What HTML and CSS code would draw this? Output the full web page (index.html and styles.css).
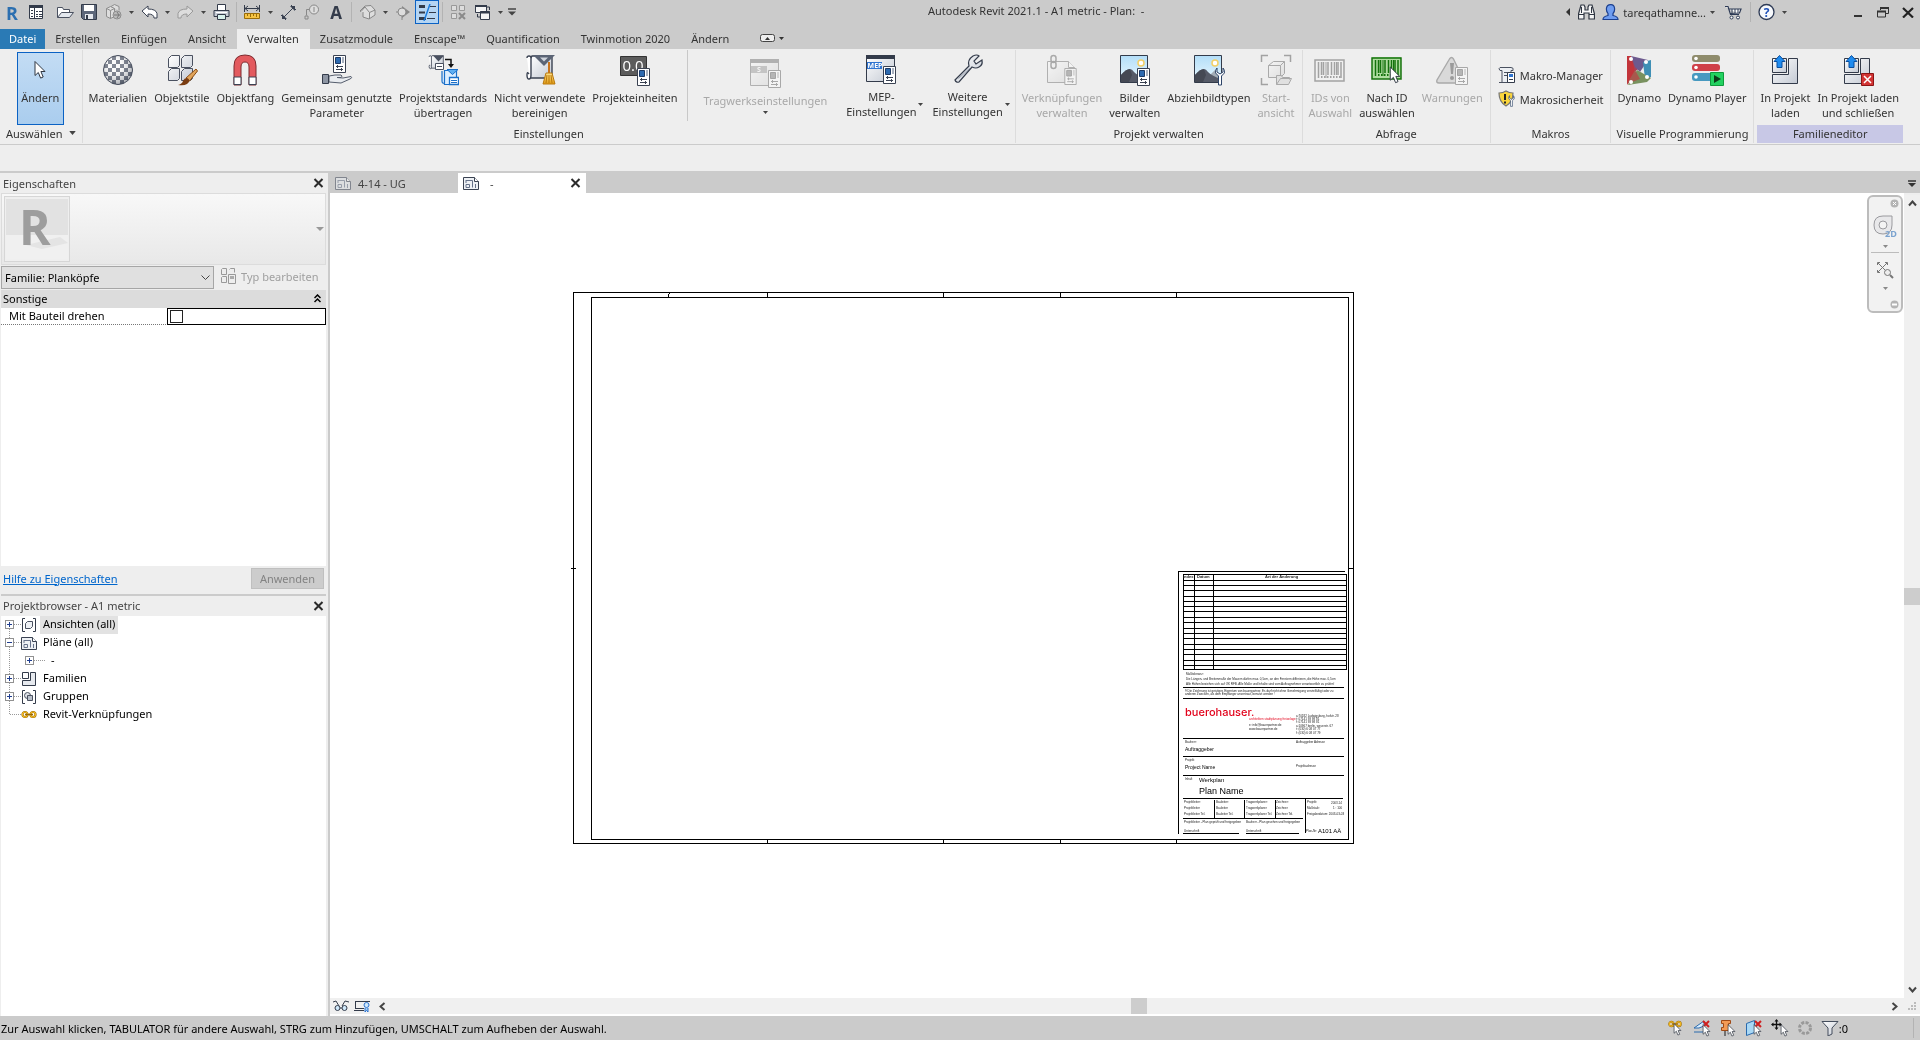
FILE: index.html
```html
<!DOCTYPE html>
<html lang="de">
<head>
    <meta charset="UTF-8" />
    <meta name="viewport" content="width=device-width, initial-scale=1.0" />
    <title>Autodesk Revit 2021.1 - A1 metric - Plan: -</title>
    <link rel="stylesheet" href="styles.css">
</head>
<body>
    <!-- shared symbols -->
    <svg class="symbols" aria-hidden="true">
        <defs>
            <linearGradient id="metal" x1="0" y1="0" x2="1" y2="1"><stop offset="0" stop-color="#fff" /><stop offset="1" stop-color="#c3c9d3" /></linearGradient>
            <linearGradient id="sky" x1="0" y1="0" x2="0" y2="1"><stop offset="0" stop-color="#b3def8" /><stop offset="1" stop-color="#eaf8ff" /></linearGradient>
            <linearGradient id="gold" x1="0" y1="0" x2="0" y2="1"><stop offset="0" stop-color="#ffe38a" /><stop offset="1" stop-color="#e09a13" /></linearGradient>
            <pattern id="checker" width="8" height="8" patternUnits="userSpaceOnUse" x="2" y="2">
                <rect width="8" height="8" fill="#fafafa" /><path d="M0 0h4v4H0zM4 4h4v4H4z" fill="#596070" />
            </pattern>
            <radialGradient id="ball" cx=".4" cy=".35" r=".7"><stop offset=".3" stop-color="#fff" stop-opacity=".25" /><stop offset="1" stop-color="#39414f" stop-opacity=".45" /></radialGradient>
        </defs>
        <symbol id="card" viewBox="0 0 13 18">
            <path d="M.5.5h12v17H.5z" fill="#fff" stroke="#3a4252" />
            <path d="M2.500 2.500h5v6h-5z" fill="#2d6ab0" stroke="#1c3a66" />
            <path d="M9 2h2v6H9z" fill="#a9b1bf" />
            <path d="M3 11.500h7M3 14.500h7" stroke="#3a4252" />
            <path d="M4 10h1v3H4zM8 13h1v3H8z" fill="#3a4252" />
        </symbol>
        <symbol id="pointer" viewBox="0 0 12 19">
            <path d="M1 1v14l3.300-3 2.300 5.600 2.600-1.100L6.900 11H11z" fill="#fff" stroke="#2f3642" />
        </symbol>
        <symbol id="sheet" viewBox="0 0 16 14">
            <path d="M.5 1.500h11l4 4v8H.5z" fill="#eef1f5" stroke="#3a4252" />
            <path d="M11.500 1.500v4h4" fill="#fff" stroke="#3a4252" />
            <path d="M3 4.500h6.500v7M3 11.500v-3h3.500v3zM3 4v3M12.500 8v4" fill="none" stroke="#66728a" />
        </symbol>
        <symbol id="close" viewBox="0 0 11 10">
            <path d="M1.500 1l8 8M9.500 1l-8 8" stroke="#2b2b2b" stroke-width="2" fill="none" />
        </symbol>
        <symbol id="down" viewBox="0 0 5 3"><path d="M0 0h5L2.500 3z" fill="#444" /></symbol>
        <symbol id="scroll" viewBox="0 0 30 26">
            <path d="M7 1h20v22H5V4z" fill="url(#metal)" stroke="#3a4252" stroke-width="1.400" />
            <path d="M2 3q0-2 2-2t2 2v17q0 4-2 4t-2-4 2-1" fill="#fff" stroke="#3a4252" stroke-width="1.400" />
        </symbol>
        <symbol id="picture" viewBox="0 0 28 28">
            <path d="M.5.500h27v27H.5z" fill="url(#sky)" stroke="#333b4a" />
            <circle cx="21" cy="8" r="3" fill="#fff" stroke="#f3d067" stroke-width="1.500" />
            <path d="M14 22l7-7 6 6v6H14z" fill="#a3adb6" />
            <path d="M1 20q5-6 9-6 2 0 4 3 4 4 13 7v3H1z" fill="#565b68" />
            <path d="M1 20q5-6 9-6l2 6-3 7H1z" fill="#454954" />
        </symbol>
        <symbol id="redx" viewBox="0 0 8 8"><path d="M1 1l6 6M7 1L1 7" stroke="#cf2020" stroke-width="2" /></symbol>
        <symbol id="spanner" viewBox="0 0 10 19">
            <path d="M2 1v4l3 2 3-2V1q2 2 1.400 5L6.500 9v9h-3V9L.6 6Q0 3 2 1z" fill="#fff" stroke="#2d4468" />
        </symbol>
        <symbol id="barcode" viewBox="0 0 31 23">
            <path d="M1 1h29v21H1z" fill="#f3f3f3" stroke="currentColor" stroke-width="1.500" />
            <path d="M4.500 3v16M7.500 3v13M9.500 3v13M14 3v13M17.500 3v13M20.500 3v13M24 3v13M27 3v16" stroke="currentColor" stroke-width="1.500" />
            <path d="M12 3v16M22.500 3v13" stroke="currentColor" />
            <path d="M7 18h20" stroke="currentColor" stroke-width="2" stroke-dasharray="1.500 1.500" />
        </symbol>
        <symbol id="chain" viewBox="0 0 16 9">
            <rect x="1.500" y="2" width="5" height="5" rx="2.500" fill="#fff" stroke="#9a6a06" stroke-width="2.200" />
            <rect x="9.500" y="2" width="5" height="5" rx="2.500" fill="#fff" stroke="#9a6a06" stroke-width="2.200" />
            <rect x="1.500" y="2" width="5" height="5" rx="2.500" fill="none" stroke="#f7bd22" stroke-width="1.200" />
            <rect x="9.500" y="2" width="5" height="5" rx="2.500" fill="none" stroke="#f7bd22" stroke-width="1.200" />
            <path d="M4 4.500h8" stroke="#9a6a06" stroke-width="1.500" />
        </symbol>
        <symbol id="load" viewBox="0 0 28 30">
            <path d="M17.500 3.500h9v25h-25v-9h16z" fill="url(#metal)" stroke="#333b4a" />
            <path d="M1.500 3.500h14v14h-14z" fill="url(#metal)" stroke="#333b4a" />
            <path d="M8.500.5l5.500 6h-3v6H6v-6H3z" fill="#1f8cf0" stroke="#0b4f9e" />
        </symbol>
    </svg>

    <header class="titlebar">
        <div class="quick-access">
            <button class="tool" aria-label="Revit"><svg width="18" height="24"><text x="9" y="20" class="logo-r">R</text></svg></button>
            <button class="tool" aria-label="Start"><svg width="16" height="16"><path d="M1.500 1.500h13v13h-13z" fill="#fff" stroke="#333b4a" /><path d="M1 1h14v3H1z" fill="#333b4a" /><path d="M6.500 4v11M3 6.500h2M3 9.500h2M3 12.500h2M8 7.500h2M11 7.500h3M8 10.500h2M11 10.500h3M8 12.500h2M11 12.500h3" stroke="#333b4a" /></svg></button>
            <button class="tool tool-gap" aria-label="Öffnen"><svg width="18" height="16"><path d="M1.500 13.500v-10h5l1 2h6v3" fill="#fff" stroke="#4a5160" /><path d="M1.500 13.500l4-5h12l-4 5z" fill="#e4e8ee" stroke="#4a5160" /></svg></button>
            <button class="tool" aria-label="Speichern"><svg width="16" height="16"><path d="M.5.500h15v15H2.500l-2-2z" fill="#5d677a" stroke="#333b4a" /><path d="M3 1h10v6H3z" fill="#fff" /><path d="M4 10h8v5H4z" fill="#e6e9ee" /><path d="M5 11h2v4H5z" fill="#333b4a" /></svg></button>
            <button class="tool" aria-label="Synchronisieren"><svg width="17" height="17"><path d="M1.500 4.500l4-2 4 2v8l-4 2-4-2zM5.500 6.500l4-2M1.500 4.500l4 2v8M6 2.500l3.500-2 4.500 2v4" fill="#ddd" stroke="#8e8e8e" /><circle cx="12" cy="11" r="4" fill="#bbb" stroke="#8e8e8e" /><path d="M9 11h6M12 8l2 3-2 3" stroke="#777" fill="none" /></svg></button>
            <button class="drop" aria-label="Mehr"><svg width="5" height="3"><use href="#down" /></svg></button>
            <button class="tool" aria-label="Rückgängig"><svg width="17" height="14"><path d="M1 6l6-5v3q8 0 9 4.500V13h-3q0-4-6-4v3z" fill="#fff" stroke="#3a4252" /></svg></button>
            <button class="drop" aria-label="Mehr"><svg width="5" height="3"><use href="#down" /></svg></button>
            <button class="tool" aria-label="Wiederherstellen"><svg width="17" height="14"><path d="M16 6l-6-5v3q-8 0-9 4.500V13h3q0-4 6-4v3z" fill="#ddd" stroke="#999" /></svg></button>
            <button class="drop" aria-label="Mehr"><svg width="5" height="3"><use href="#down" /></svg></button>
            <button class="tool" aria-label="Drucken"><svg width="17" height="16"><path d="M4.500 6V.5h8V6" fill="#fff" stroke="#333b4a" /><path d="M1 6.500h15v6H1z" fill="#c6cbd4" stroke="#333b4a" /><path d="M4.500 10.500h8v5h-8z" fill="#d8f1ec" stroke="#333b4a" /><path d="M3 8.500h11" stroke="#fff" /></svg></button>
            <span class="sep"></span>
            <button class="tool" aria-label="Messen"><svg width="16" height="14"><path d="M1 3.500h14M.5 0v7M15.500 0v7M4 1L1 3.500 4 6M12 1l3 2.500L12 6" stroke="#333b4a" fill="none" /><path d="M.5 8.500h15v5H.5z" fill="#f6c445" stroke="#9a6d09" /><path d="M3.500 9v2M6.500 9v3M9.500 9v2M12.500 9v3" stroke="#9a6d09" /></svg></button>
            <button class="drop" aria-label="Mehr"><svg width="5" height="3"><use href="#down" /></svg></button>
            <button class="tool" aria-label="Bemaßung"><svg width="17" height="17"><path d="M3 14L14 3M1 11l5 5M11 1l5 5" stroke="#3a4252" fill="none" /><path d="M2 15v-5l5 5zM15 2v5l-5-5z" fill="#3a4252" /></svg></button>
            <button class="tool" aria-label="Bauteil"><svg width="17" height="16"><circle cx="10" cy="5.500" r="4.500" fill="#ddd" stroke="#888" /><path d="M10 3v5M5.500 5.500h-3v6M1 12h3v3H1z" fill="none" stroke="#888" /></svg></button>
            <button class="tool" aria-label="Text"><svg width="18" height="24"><text x="9" y="19" class="bold-a">A</text></svg></button>
            <span class="sep"></span>
            <button class="tool" aria-label="3D-Ansicht"><svg width="17" height="16"><path d="M1 7l5-5 6-.500 4 4.500v5l-6 4-6-2V8M1 7l1 .500 4-4.500 4.500 5.500V15M10.500 8.500L16 6" fill="#ddd" stroke="#888" /></svg></button>
            <button class="drop" aria-label="Mehr"><svg width="5" height="3"><use href="#down" /></svg></button>
            <button class="tool" aria-label="Schnitt"><svg width="15" height="15"><path d="M6 1l8 6-8 6z" fill="#888" /><circle cx="6" cy="7" r="4" fill="#ddd" stroke="#888" /><path d="M6 11v4M0 7h2" stroke="#888" /></svg></button>
            <button class="tool tool-on" aria-label="Dünne Linien"><svg width="18" height="17"><path d="M1 2.500h6M1 14.500h7" stroke="#333b4a" stroke-width="3" /><path d="M1 8.500h6" stroke="#333b4a" stroke-width="2" /><path d="M12 2.500h6M11 8.500h7M9 14.500h8" stroke="#333b4a" /><path d="M6 17L12 0" stroke="#1c7de0" stroke-width="1.500" /></svg></button>
            <span class="sep"></span>
            <button class="tool" aria-label="Inaktive schließen"><svg width="17" height="16"><path d="M1.500 1.500h5v5h-5zM9.500 1.500h5v5h-5zM1.500 9.500h5v5h-5z" fill="#ddd" stroke="#999" /><path d="M9 9l6 6M15 9l-6 6" stroke="#8a8a8a" stroke-width="2" /></svg></button>
            <button class="tool" aria-label="Fenster wechseln"><svg width="17" height="16"><path d="M1.500 1.500h11v7h-11zM6.500 7.500h9v8h-9z" fill="#f4f4f4" stroke="#333b4a" /><path d="M1 2h12M6 8.500h10" stroke="#333b4a" stroke-width="2" /><path d="M13 3h2.500v3M3.500 10v3H6" fill="none" stroke="#333b4a" /></svg></button>
            <button class="drop" aria-label="Mehr"><svg width="5" height="3"><use href="#down" /></svg></button>
            <button class="drop" aria-label="Anpassen"><svg width="8" height="8"><path d="M0 1h8" stroke="#444" stroke-width="1.500" /><path d="M0 3.500h8l-4 4z" fill="#444" /></svg></button>
        </div>
        <h1 class="window-title">Autodesk Revit 2021.1 - A1 metric - Plan: &nbsp;-</h1>
        <div class="window-tools">
            <button class="drop" aria-label="Einklappen"><svg width="4" height="8"><path d="M4 0v8L0 4z" fill="#333" /></svg></button>
            <button class="tool" aria-label="Suchen"><svg width="17" height="16"><path d="M3 1h3l1 2v3h3V3l1-2h3l2.500 9v5H11V9H6v6H.5v-5z" fill="#f5f5f5" stroke="#2f3642" stroke-width="1.200" /><path d="M3.500 3v6M13.500 3v6M1 10.500h5M11 10.500h5" stroke="#2f3642" /></svg></button>
            <button class="account"><svg width="17" height="17"><path d="M1 15.500q0-3 5-4V9.500Q4 7 4.500 4T8.500.700 12.500 4 11 9.500v2q5 1 5 4z" fill="#6f9df0" stroke="#1b3f8f" stroke-width="1.200" /></svg>tareqathamne...<svg width="5" height="3"><use href="#down" /></svg></button>
            <button class="tool cart" aria-label="App Store"><svg width="17" height="15"><path d="M0 1.500h3l2.500 8h8.500M4 4h12l-1.500 4-9 .5" fill="#fff" stroke="#2d3a55" stroke-width="1.200" /><path d="M7 4v4M10 4v4M13 4v4" stroke="#2d3a55" /><circle cx="6.500" cy="12.500" r="1.500" fill="#fff" stroke="#2d3a55" /><circle cx="13" cy="12.500" r="1.500" fill="#fff" stroke="#2d3a55" /></svg></button>
            <span class="sep"></span>
            <button class="tool" aria-label="Hilfe"><svg width="17" height="18"><circle cx="8.500" cy="9" r="7.500" fill="#f7f9fc" stroke="#2d3a55" stroke-width="1.300" /><text x="8.500" y="14" class="help-mark">?</text></svg></button>
            <button class="drop" aria-label="Mehr"><svg width="5" height="3"><use href="#down" /></svg></button>
        </div>
        <div class="window-buttons">
            <button class="win" aria-label="Minimieren"><svg width="12" height="12"><path d="M2 10h8" stroke="#333" stroke-width="2" /></svg></button>
            <button class="win" aria-label="Wiederherstellen"><svg width="12" height="12"><path d="M3.500 4V1.500h8v6H9M.5 5.500H8.500v5.500H.5z" fill="none" stroke="#333" /><path d="M3 2h9M0 5.500h9" stroke="#333" stroke-width="2" /></svg></button>
            <button class="win" aria-label="Schließen"><svg width="12" height="11"><path d="M1 1l10 9.500M11 1L1 10.500" stroke="#222" stroke-width="2.200" /></svg></button>
        </div>
    </header>

    <nav class="ribbon-tabs">
        <button class="tab tab-file">Datei</button>
        <button class="tab">Erstellen</button>
        <button class="tab">Einfügen</button>
        <button class="tab">Ansicht</button>
        <button class="tab tab-active">Verwalten</button>
        <button class="tab">Zusatzmodule</button>
        <button class="tab">Enscape™</button>
        <button class="tab">Quantification</button>
        <button class="tab">Twinmotion 2020</button>
        <button class="tab">Ändern</button>
        <button class="tab tab-toggle" aria-label="Multifunktionsleiste minimieren"><svg width="24" height="9"><rect x=".5" y=".5" width="14" height="7" rx="2" fill="#eee" stroke="#444" /><path d="M5 6h5L7.500 3zM19 3h5l-2.500 3z" fill="#333" /></svg></button>
    </nav>

    <div class="ribbon">
        <section class="group group-select">
            <div class="group-body">
                <button class="big big-active"><svg width="32" height="32"><use href="#pointer" x="10" y="6" width="12" height="20" /></svg>Ändern</button>
            </div>
            <h2 class="group-title">Auswählen <svg width="7" height="4" viewBox="0 0 5 3"><use href="#down" /></svg></h2>
        </section>

        <section class="group">
            <div class="group-body">
                <button class="big"><svg width="32" height="32"><circle cx="16" cy="16" r="14.500" fill="url(#checker)" /><circle cx="16" cy="16" r="14.500" fill="url(#ball)" stroke="#4a5160" /></svg>Materialien</button>
                <button class="big"><svg width="32" height="32"><path d="M2.500 4.500l3-3h8v10l-2 2h-9zM15.500 4.500l3-3h8v10l-2 2h-9zM2.500 17.500l3-3h8v10l-2 2h-9zM15.500 17.500l3-3h8v10l-2 2h-9z" fill="url(#metal)" stroke="#4a5160" /><path d="M20 24L30 15l1.500 2-8 10z" fill="#e0a45a" stroke="#8a4b12" /><path d="M12 31q4-1 5-4 2-4 5-2.500 3 2.500-1 5.500-3 2-9 1z" fill="#7b3d12" /></svg>Objektstile</button>
                <button class="big"><svg width="32" height="32"><path d="M5 31V12Q5 1 16 1t11 11v19h-7V13q0-5-4-5t-4 5v18z" fill="#e35a5e" stroke="#7d2a2e" /><path d="M5 23h7v7.500H5zM20 23h7v7.500h-7z" fill="#fff" stroke="#3a4252" /></svg>Objektfang</button>
                <button class="big"><svg width="32" height="32"><use href="#card" x="12" y="1" width="13" height="18" /><path d="M8 22l6-1h6q2 1 0 2.500h-4l6 .5 8-1.500q2 1-1 2.500l-9 4-12-1z" fill="#e9ecf0" stroke="#555d6c" /><path d="M1.500 20.500h6v9h-6z" fill="#8d95a3" stroke="#333b4a" /></svg>Gemeinsam genutzte<br>Parameter</button>
                <button class="big"><svg width="32" height="32"><use href="#scroll" x="1" y="1" width="17" height="15" /><path d="M6 1.500h11l-5.500 6z" fill="#4a5160" /><path d="M8.500 9.500h8v6h-8z" fill="#fff" stroke="#4a5160" /><path d="M10 12.500h5" stroke="#4a5160" /><path d="M18 5.500h6v5" fill="none" stroke="#111" stroke-width="1.500" /><path d="M21 10h6l-3 4z" fill="#111" /><path d="M17.500 16.500h12v14h-12zM15 17v10q0 3 3 2" fill="#dceeff" stroke="#1a6fc9" stroke-width="1.200" /><path d="M20 15.500h11l-5.500 5z" fill="#5eaef2" stroke="#1a6fc9" /><path d="M22.500 23.500h9v7h-9z" fill="#fff" stroke="#1a6fc9" stroke-width="1.300" /><path d="M24 26.500h6M24 28.500h6" stroke="#1a6fc9" /></svg>Projektstandards<br>übertragen</button>
                <button class="big"><svg width="32" height="32"><use href="#scroll" x="1" y="1" width="30" height="26" /><path d="M9 1h22L20 12z" fill="#5b6475" /><path d="M16 3.500h8l-4 4z" fill="#cfd4dc" /><path d="M24 8h2v11h-2z" fill="#c9731a" /><path d="M22 19h6l3 11H19z" fill="url(#gold)" stroke="#b9780c" /><path d="M22 29l1-8M25 29v-8M28 29l-1-8" stroke="#b9780c" /></svg>Nicht verwendete<br>bereinigen</button>
                <button class="big"><svg width="32" height="32"><path d="M1.500 2.500h26v19h-26z" fill="#5c5c5c" stroke="#333" /><text x="14" y="17" class="units">0.0</text><use href="#card" x="18" y="14" width="13" height="18" /></svg>Projekteinheiten</button>
                <span class="group-rule"></span>
                <button class="big big-low disabled" disabled><svg width="32" height="32"><path d="M1.500 2.500h28v26h-28z" fill="url(#metal)" stroke="#555" /><path d="M1 2h29v4H1z" fill="#555" /><path d="M2 9h16v7H2z" fill="#888" /><text x="10" y="15" class="badge">S</text><use href="#card" x="19" y="13" width="13" height="18" /></svg>Tragwerkseinstellungen<svg class="under" width="5" height="3"><use href="#down" /></svg></button>
                <button class="big big-drop"><svg width="32" height="32"><path d="M1.500 2.500h28v26h-28z" fill="url(#metal)" stroke="#333b4a" /><path d="M1 2h29v4H1z" fill="#333b4a" /><path d="M2 9h15v7H2z" fill="#2f74d0" /><text x="10" y="15" class="badge">MEP</text><use href="#card" x="18" y="13" width="13" height="18" /></svg>MEP-<br>Einstellungen<svg class="beside" width="5" height="3"><use href="#down" /></svg></button>
                <button class="big big-drop"><svg width="32" height="32"><path d="M21 3q4-2 6 0l-5 5 2 3 6-4q1 5-3 7-3 2-7 0L7 29q-3 1-4-2L17 13q-2-6 4-10z" fill="url(#metal)" stroke="#333b4a" stroke-width="1.200" /><path d="M6.500 25.500L18 15" stroke="#9aa2b0" /></svg>Weitere<br>Einstellungen<svg class="beside" width="5" height="3"><use href="#down" /></svg></button>
            </div>
            <h2 class="group-title">Einstellungen</h2>
        </section>

        <section class="group">
            <div class="group-body">
                <button class="big disabled" disabled><svg width="32" height="32"><path d="M1.500 7.500h21l6 6v15h-27z" fill="url(#metal)" stroke="#555" /><path d="M22.500 7.500v6h6" fill="#fff" stroke="#555" /><rect x="5" y="1.500" width="5" height="7" rx="2.500" fill="none" stroke="#444" stroke-width="1.500" /><rect x="5" y="7.500" width="5" height="7" rx="2.500" fill="none" stroke="#444" stroke-width="1.500" /><use href="#card" x="18" y="14" width="13" height="17" /></svg>Verknüpfungen<br>verwalten</button>
                <button class="big"><svg width="32" height="32"><use href="#picture" x="1" y="1" width="28" height="28" /><use href="#card" x="18" y="14" width="13" height="18" /></svg>Bilder<br>verwalten</button>
                <button class="big"><svg width="32" height="32"><use href="#picture" x="1" y="1" width="28" height="28" /><use href="#spanner" x="22" y="13" width="10" height="19" /></svg>Abziehbildtypen</button>
                <button class="big disabled" disabled><svg width="32" height="32"><path d="M1.500 8V1.500H8M24 1.500h6.500V8M1.500 24v6.500H8" fill="none" stroke="#333" stroke-width="1.500" /><path d="M8.500 11.500l5-4h11v12l-4 4h-12zM8.500 11.500h12v12M20.500 11.500l4-4" fill="url(#metal)" stroke="#444" /><path d="M16.500 30.500v-9h5l1 2h7v2M16.500 30.500l4-6h11l-3 6z" fill="#ccc" stroke="#444" /></svg>Start-<br>ansicht</button>
            </div>
            <h2 class="group-title">Projekt verwalten</h2>
        </section>

        <section class="group">
            <div class="group-body">
                <button class="big disabled" disabled><svg width="32" height="32" color="#333"><use href="#barcode" x="0" y="5" width="31" height="23" /></svg>IDs von<br>Auswahl</button>
                <button class="big"><svg width="32" height="32" color="#1b7d12"><path d="M1 3h29v22H1z" fill="#b9e8a8" /><use href="#barcode" class="tint" x="0" y="3" width="31" height="23" /><use href="#pointer" x="18" y="12" width="12" height="18" /></svg>Nach ID<br>auswählen</button>
                <button class="big disabled" disabled><svg width="32" height="32"><path d="M13.500 5q2-3 4 0l10 21q0 3-2 3H3q-3 0-2-3z" fill="#bbb" stroke="#444" stroke-width="1.400" /><path d="M14 9h4l-1 11h-2z" fill="#222" /><circle cx="16" cy="24" r="2" fill="#222" /><use href="#card" x="19" y="13" width="13" height="18" /></svg>Warnungen</button>
            </div>
            <h2 class="group-title">Abfrage</h2>
        </section>

        <section class="group">
            <div class="group-body group-stack">
                <button class="small"><svg width="18" height="18"><path d="M2 1.500h11q3 0 2 3h-2v12H4v-12H2q-2-2 0-3zM1 16.500h10" fill="#eceff3" stroke="#4a5160" /><path d="M6 6.500h5M6 9.500h3" stroke="#4a5160" /><path d="M9.500 6.500h7v10h-7z" fill="#fff" stroke="#333b4a" /><path d="M11 8h4v3h-4z" fill="#2f74d0" /><path d="M11 13.500h4" stroke="#333b4a" /></svg>Makro-Manager</button>
                <button class="small"><svg width="18" height="18"><path d="M1 3q4 0 7-2 3 2 7 2 0 9-7 13Q1 12 1 3z" fill="#fbd63c" stroke="#777" stroke-width="1.200" /><path d="M7 4v6M7 11.500v2" stroke="#222" stroke-width="2" /><use href="#spanner" x="10" y="5" width="7" height="12" /></svg>Makrosicherheit</button>
            </div>
            <h2 class="group-title">Makros</h2>
        </section>

        <section class="group">
            <div class="group-body">
                <button class="big"><svg width="32" height="32"><path d="M5 2l14 10-10 8z" fill="#a5435a" /><path d="M4 2h4l4 16-8 13z" fill="#c2343a" /><path d="M8 2l17 4-8 12-5-5z" fill="#6d5a8e" /><path d="M20 8l8-2v17l-6 2z" fill="#3f8fb5" /><path d="M5 31l9-15 14 8-4 4z" fill="#79915f" /><path d="M4 30l8-14 5 9z" fill="#a8584d" /><circle cx="8" cy="5" r="2" fill="#fff" /><circle cx="23" cy="8" r="2" fill="#fff" /><circle cx="8" cy="28" r="2" fill="#fff" /><circle cx="24" cy="23" r="2" fill="#fff" /></svg>Dynamo</button>
                <button class="big"><svg width="34" height="32"><rect x="2" y="1" width="28" height="7" rx="3" fill="#8f8c6c" /><rect x="2" y="10" width="28" height="7" rx="3" fill="#cf4048" /><rect x="2" y="19" width="28" height="8" rx="3" fill="#4799c0" /><circle cx="6" cy="4.500" r="1.800" fill="#fff" /><circle cx="6" cy="13.500" r="1.800" fill="#fff" /><circle cx="6" cy="23" r="1.800" fill="#fff" /><path d="M20.500 18.500h13v13h-13z" fill="#23d160" stroke="#0f9a3c" /><path d="M24 21v8l7-4z" fill="#0c3b1a" /></svg>Dynamo Player</button>
            </div>
            <h2 class="group-title">Visuelle Programmierung</h2>
        </section>

        <section class="group group-family">
            <div class="group-body">
                <button class="big"><svg width="32" height="32"><use href="#load" x="2" y="1" width="28" height="30" /></svg>In Projekt<br>laden</button>
                <button class="big"><svg width="32" height="32"><use href="#load" x="1" y="1" width="28" height="30" /><path d="M19.500 19.500h12v12h-12z" fill="#d23434" stroke="#8c1414" /><path d="M22 22l7 7M29 22l-7 7" stroke="#fff" stroke-width="1.500" /></svg>In Projekt laden<br>und schließen</button>
            </div>
            <h2 class="group-title">Familieneditor</h2>
        </section>
    </div>
    <div class="options-bar"></div>

    <main class="workspace">
        <aside class="sidebar">
            <section class="panel properties">
                <header class="panel-head"><h2>Eigenschaften</h2><button class="panel-close" aria-label="Schließen"><svg width="11" height="10"><use href="#close" /></svg></button></header>
                <div class="type-preview">
                    <div class="thumb"><svg width="62" height="60"><path d="M0 0h62v36H0z" fill="#e2e2e2" /><path d="M0 36h62v24H0z" fill="#f0f0f0" /><path d="M20 46l34-8 8 6-26 6z" fill="#e4e4e4" /><text x="13" y="46" class="thumb-r">R</text></svg></div>
                    <svg width="8" height="4" viewBox="0 0 8 4"><path d="M0 0h8L4 4z" fill="#999" /></svg>
                </div>
                <div class="type-row">
                    <div class="select-wrap">
                        <select aria-label="Familie"><option>Familie: Planköpfe</option></select>
                        <svg width="9" height="6"><path d="M.5.500l4 4 4-4" fill="none" stroke="#444" /></svg>
                    </div>
                    <button class="edit-type" disabled><svg width="17" height="16"><path d="M1.500 1.500l1-1h4v6h-5zM9.500 1.500l1-1h4v4M1.500 9.500l1-1h4v6h-5z" fill="none" stroke="#999" /><path d="M8.500 6.500h7v9h-7z" fill="#eee" stroke="#999" /><path d="M10 8h4v3h-4z" fill="#aaa" /></svg>Typ bearbeiten</button>
                </div>
                <div class="category"><span>Sonstige</span><svg width="7" height="9"><path d="M.5 4l3-3 3 3M.5 8l3-3 3 3" fill="none" stroke="#000" stroke-width="1.500" /></svg></div>
                <div class="prop-row">
                    <label for="rotate">Mit Bauteil drehen</label>
                    <div class="prop-value"><input type="checkbox" id="rotate" /></div>
                </div>
                <div class="prop-space"></div>
                <footer class="panel-foot"><a href="#hilfe">Hilfe zu Eigenschaften</a><button class="apply" disabled>Anwenden</button></footer>
            </section>

            <section class="panel browser">
                <header class="panel-head"><h2>Projektbrowser - A1 metric</h2><button class="panel-close" aria-label="Schließen"><svg width="11" height="10"><use href="#close" /></svg></button></header>
                <ul class="tree">
                    <li><div class="node"><button class="expander" aria-label="Öffnen"></button><i class="dash"></i><svg width="16" height="14"><path d="M4 .5H1.500v13H4M12 .5h2.500v13H12" fill="none" stroke="#333b4a" /><path d="M4.500 5.500l2-2h5v5l-2 2h-5z" fill="#eef1f5" stroke="#4a5160" /></svg><span class="node-on">Ansichten (all)</span></div></li>
                    <li><div class="node"><button class="expander open" aria-label="Schließen"></button><i class="dash"></i><svg width="16" height="14"><use href="#sheet" /></svg><span>Pläne (all)</span></div>
                        <ul>
                            <li><div class="node node-sub"><button class="expander" aria-label="Öffnen"></button><i class="dash dash-long"></i><span>-</span></div></li>
                        </ul>
                    </li>
                    <li><div class="node"><button class="expander" aria-label="Öffnen"></button><i class="dash"></i><svg width="16" height="14"><path d="M1.500.5h6v6h-6z" fill="#fff" stroke="#333b4a" /><path d="M9.500.500h5v13h-13v-5h8z" fill="#e6e9ee" stroke="#333b4a" /></svg><span>Familien</span></div></li>
                    <li><div class="node"><button class="expander" aria-label="Öffnen"></button><i class="dash"></i><svg width="16" height="14"><path d="M4 .5H1.500v13H4M12 .5h2.500v13H12" fill="none" stroke="#333b4a" /><circle cx="6.500" cy="5.500" r="3" fill="#dfe3e9" stroke="#4a5160" /><path d="M6.500 5.500h5v5h-5z" fill="#b8bfca" stroke="#4a5160" /></svg><span>Gruppen</span></div></li>
                    <li><div class="node node-leaf"><i class="dash dash-long"></i><svg width="16" height="9"><use href="#chain" /></svg><span>Revit-Verknüpfungen</span></div></li>
                </ul>
            </section>
        </aside>

        <section class="editor">
            <nav class="doc-tabs">
                <button class="doc-tab"><svg class="faded" width="16" height="14"><use href="#sheet" /></svg>4-14 - UG</button>
                <div class="doc-tab doc-active"><svg width="16" height="14"><use href="#sheet" /></svg><span>-</span><button class="panel-close" aria-label="Plan schließen"><svg width="11" height="10"><use href="#close" /></svg></button></div>
                <button class="tab-list" aria-label="Registerkarten"><svg width="8" height="7"><path d="M0 1h8" stroke="#333" stroke-width="1.500" /><path d="M0 3h8L4 7z" fill="#333" /></svg></button>
            </nav>
            <div class="view">
                <div class="canvas">
                    <svg class="drawing" width="100%" height="100%">
                        <g transform="translate(243 99)">
                            <g class="lines">
                                <path d="M.5.500h780v551H.5zM18.500 5.500h757v542h-757z" />
                                <path d="M95.500 5v-3M96.500 2v-2M194.500 0v5M370.500 0v5M487.500 0v5M603.500 0v5M194.500 547v4M370.500 547v4M487.500 547v4M603.500 547v4M-2 276.500h5M776 276.500h5" />
                                <path d="M605.500 542V279.500h166" />
                                <path d="M610.500 282.500h163v95h-163zM621.500 282v96M640.500 282v96" />
                                <path d="M610 288.500h163M610 293.500h163M610 298.500h163M610 304.500h163M610 309.500h163M610 314.500h163M610 319.500h163M610 325.500h163M610 330.500h163M610 336.500h163M610 341.500h163M610 346.500h163M610 352.500h163M610 357.500h163M610 362.500h163M610 368.500h163M610 373.500h163" />
                                <path d="M610 395.500h161M610 406.500h161M610 446.500h161M610 464.500h161M610 483.500h161M610 506.500h160M610 526.500h120M610 541.500h56M673 541.500h53" />
                                <path d="M641.500 508v18M671.500 508v18M702.500 508v18M732.500 506v35" />
                            </g>
                            <g class="micro micro-bold"><text x="610" y="286">Index</text><text x="624" y="286">Datum</text><text x="692" y="286">Art der Änderung</text></g>
                            <g class="micro">
                                <text x="613" y="383">Maßtoleranz:</text>
                                <text x="613" y="388">Die Längen- und Breitenmaße der Mauern dürfen max. 0,5cm, an den Fenstern differieren, die Höhe max. 0,5cm</text>
                                <text x="613" y="393">Alle Höhen beziehen sich auf OK RFB. Alle Maße und Inhalte sind vom Auftragnehmer verantwortlich zu prüfen!</text>
                                <text x="612" y="400">§ Die Zeichnung ist geistiges Eigentum von bauerpartner. Es darf nicht ohne Genehmigung vervielfältigt oder zu</text>
                                <text x="612" y="403">anderen Zwecken, als dem Empfänger anvertraut, benutzt werden !</text>
                                <text x="676" y="434">e: info@bauerpartner.de</text><text x="676" y="438">www.bauerpartner.de</text>
                                <text x="723" y="425">a:70182 Ludwigsburg, hofstr. 28</text><text x="723" y="428">t: 07141 93 98 81</text><text x="723" y="431">f: 07141 93 98 81</text>
                                <text x="723" y="435">a:10967 berlin, weserstr. 67</text><text x="723" y="438">t: (030) 6 08 07 77</text><text x="723" y="442">f: (030) 6 08 07 79</text>
                                <text x="612" y="451">Bauherr:</text><text x="723" y="451">Auftraggeber Adresse</text>
                                <text x="612" y="469">Projekt</text><text x="723" y="475">Projektadresse</text><text x="612" y="488">Inhalt</text>
                                <text x="611" y="511">Projektleiter:</text><text x="643" y="511">Bauleiter:</text><text x="673" y="511">Tragwerkplaner:</text><text x="703" y="511">Zeichner:</text><text x="734" y="511">Projekt:</text><text x="758" y="512">2003.14</text>
                                <text x="611" y="517">Projektleiter</text><text x="643" y="517">Bauleiter</text><text x="673" y="517">Tragwerkplaner</text><text x="703" y="517">Zeichner</text><text x="734" y="517">Maßstab:</text><text x="760" y="517">1 : 100</text>
                                <text x="611" y="523">Projektleiter Tel.</text><text x="643" y="523">Bauleiter Tel.</text><text x="673" y="523">Tragwerkplaner Tel.</text><text x="703" y="523">Zeichner Tel.</text><text x="734" y="523">Freigabedatum: 2003-03-03</text>
                                <text x="611" y="531">Projektleiter - Plan geprüft und freigegeben</text><text x="673" y="531">Bauherr - Plan gesehen und freigegeben</text>
                                <text x="611" y="540">Unterschrift</text><text x="673" y="540">Unterschrift</text><text x="733" y="540">Plan-Nr:</text>
                            </g>
                            <text x="612" y="424" class="brand">buerohauser.</text>
                            <text x="676" y="428" class="micro brand-sub">architekten stadtplanung freianlage</text>
                            <g class="field"><text x="612" y="459">Auftraggeber</text><text x="612" y="477">Project Name</text><text x="745" y="541" class="field-m">A101 AÄ</text><text x="626" y="490" class="field-m">Werkplan</text><text x="626" y="502" class="field-l">Plan Name</text></g>
                        </g>
                    </svg>
                    <div class="navbar">
                        <button class="nav-dot" aria-label="Schließen"><svg width="9" height="9"><circle cx="4.500" cy="4.500" r="4" fill="#b4b4b4" /><path d="M3 3l3 3M6 3L3 6" stroke="#fff" /></svg></button>
                        <button class="nav-tool" aria-label="Steuerrad"><svg width="26" height="26"><path d="M11 2h9v9q0 9-9 9t-9-9 9-9z" fill="#e8e8ea" stroke="#9a9a9e" /><circle cx="11" cy="11" r="4" fill="#f4f4f4" stroke="#9a9a9e" /><text x="13" y="23" class="two-d">2D</text></svg><svg width="5" height="3"><use href="#down" /></svg></button>
                        <button class="nav-tool nav-zoom" aria-label="Zoom"><svg width="18" height="18"><path d="M1.500 4V1.500H4M9 1.500h2.500V4M1.500 9v2.500H4M2 2l9 9M11 2l-9 9" fill="none" stroke="#777" /><circle cx="11.500" cy="11.500" r="3" fill="#eee" stroke="#777" /><path d="M14 14l3 3" stroke="#777" stroke-width="2" /></svg><svg width="5" height="3"><use href="#down" /></svg></button>
                        <button class="nav-dot" aria-label="Optionen"><svg width="9" height="9"><circle cx="4.500" cy="4.500" r="4" fill="#b4b4b4" /><path d="M2 4.500h5" stroke="#fff" stroke-width="2" /></svg></button>
                    </div>
                </div>
                <div class="vscroll"><svg width="9" height="7"><path d="M1 5.500l3.500-4 3.500 4" fill="none" stroke="#444" stroke-width="2" /></svg><span class="thumb-v"></span><svg width="9" height="7"><path d="M1 1.500l3.500 4 3.500-4" fill="none" stroke="#444" stroke-width="2" /></svg></div>
            </div>
            <div class="view-control">
                <button aria-label="Temporär ausblenden"><svg width="17" height="12"><path d="M0 2l3-1 3 5M9 6l3-5 4 1" fill="none" stroke="#333b4a" /><circle cx="4.500" cy="8" r="2.500" fill="#cfe8fa" stroke="#333b4a" /><circle cx="11.500" cy="8" r="2.500" fill="#cfe8fa" stroke="#333b4a" /><path d="M7 8h2" stroke="#333b4a" /></svg></button>
                <button aria-label="Vorschau"><svg width="17" height="12"><path d="M1 1.500h15M1.500 1v7M1 8.500h9M0 10.500h10" fill="none" stroke="#333b4a" /><circle cx="12.500" cy="5" r="2.500" fill="#cfe8fa" stroke="#2f74d0" /><path d="M11 8v4l1.500-1.500L14 12V8" fill="#9cc8f0" stroke="#2f74d0" /></svg></button>
                <div class="hscroll"><svg width="7" height="9"><path d="M5.500 1l-4 3.500 4 3.500" fill="none" stroke="#444" stroke-width="2" /></svg><span class="thumb-h"></span><svg width="7" height="9"><path d="M1.500 1l4 3.500-4 3.500" fill="none" stroke="#444" stroke-width="2" /></svg></div>
                <svg class="grip" width="9" height="9"><path d="M6 0h2v2H6zM3 3h2v2H3zM6 3h2v2H6zM0 6h2v2H0zM3 6h2v2H3zM6 6h2v2H6z" fill="#bcbcbc" /></svg>
            </div>
        </section>
    </main>

    <footer class="statusbar">
        <span class="hint">Zur Auswahl klicken, TABULATOR für andere Auswahl, STRG zum Hinzufügen, UMSCHALT zum Aufheben der Auswahl.</span>
        <div class="status-tools">
            <button aria-label="Verknüpfungen auswählen"><svg width="18" height="18"><use href="#chain" x="0" y="1" width="16" height="8" /><use href="#pointer" x="6" y="4" width="9" height="13" /></svg></button>
            <button aria-label="Unterlagen auswählen"><svg width="18" height="18"><path d="M1 9l10-7v5l-5 2zM1 13h9" fill="#dbeeff" stroke="#2a6aad" /><use href="#redx" x="9" y="1" width="8" height="8" /><use href="#pointer" x="9" y="5" width="9" height="13" /></svg></button>
            <button aria-label="Fixierte auswählen"><svg width="18" height="18"><path d="M2.500 1.500h9v3h-2v4h2v3h-9v-3h2v-4h-2z" fill="#f29a55" stroke="#a04a16" /><path d="M6 12v5" stroke="#555" stroke-width="1.500" /><use href="#pointer" x="8" y="5" width="9" height="13" /></svg></button>
            <button aria-label="Nach Fläche auswählen"><svg width="18" height="18"><path d="M1.500 4.500l8-3v12l-8 3z" fill="#a9d8f5" stroke="#2a6aad" /><use href="#redx" x="9" y="1" width="8" height="8" /><use href="#pointer" x="8" y="5" width="9" height="13" /></svg></button>
            <button aria-label="Ziehen bei Auswahl"><svg width="18" height="18"><path d="M1 5.500h9M5.500 1v9" stroke="#111" stroke-width="1.300" /><path d="M3.500 2.500l2-2.500 2 2.500zM3.500 8.500l2 2.500 2-2.500zM2.500 3.500L0 5.500l2.500 2zM8.500 3.500l2.500 2-2.500 2z" fill="#111" /><use href="#pointer" x="9" y="5" width="9" height="13" /></svg></button>
            <button aria-label="Hintergrundprozesse"><svg width="16" height="16"><circle cx="8" cy="8" r="5.500" fill="none" stroke="#999" stroke-width="3" stroke-dasharray="3 1.300" /></svg></button>
            <button class="filter"><svg width="18" height="16"><path d="M1 1.500h16L11 8v6l-4 2V8z" fill="url(#metal)" stroke="#444d5c" /></svg>:0</button>
            <span class="sep"></span>
        </div>
    </footer>
</body>
</html>
```
FILE: styles.css
```css
* {
    box-sizing: border-box;
}

html, body {
    height: 100%;
}

body {
    margin: 0;
    display: flex;
    flex-direction: column;
    overflow: hidden;
    background: #eee;
    color: #333;
    font: 11px/15px "Noto Sans", "Open Sans", sans-serif;
}

button, select, input {
    font: inherit;
    color: inherit;
    margin: 0;
}

button {
    padding: 0;
    border: none;
    background: none;
    white-space: nowrap;
}

svg {
    display: block;
    flex: none;
}

h1, h2 {
    margin: 0;
    font: inherit;
}

ul {
    list-style: none;
    margin: 0;
    padding: 0;
}

.symbols {
    position: absolute;
    width: 0;
    height: 0;
}

/* title bar */
.titlebar {
    display: flex;
    align-items: center;
    height: 29px;
    padding-bottom: 5px;
    background: #cbcbcb;
}

.quick-access, .window-tools, .window-buttons {
    display: flex;
    align-items: center;
}

.tool, .drop, .win {
    display: flex;
    align-items: center;
    justify-content: center;
    width: 24px;
    height: 24px;
}

.drop {
    width: 12px;
}

.tool-gap {
    margin-left: 5px;
}

.tool-on {
    border: 1px solid #0b62c4;
    background: #b5d5f3;
}

.sep {
    width: 1px;
    height: 20px;
    margin: 0 3px;
    background: #b3b3b3;
}

.logo-r {
    font: bold 18px "Open Sans", sans-serif;
    fill: #2c6fb0;
    text-anchor: middle;
}

.bold-a {
    font: bold 17px "Open Sans", sans-serif;
    fill: #333b4a;
    text-anchor: middle;
}

.help-mark {
    font: bold 12px "Open Sans", sans-serif;
    fill: #1e50b8;
    text-anchor: middle;
}

.window-title {
    flex: 1;
    padding: 0 8px 4px 0;
    text-align: center;
}

.account {
    display: flex;
    align-items: center;
    gap: 4px;
    margin-left: 4px;
}

.cart {
    margin: 0 2px 0 6px;
}

.window-buttons {
    margin-left: 55px;
}

.win {
    width: 25px;
}

/* ribbon */
.ribbon-tabs {
    display: flex;
    height: 20px;
    background: #cbcbcb;
}

.tab {
    padding: 0 11px 1px 10px;
}

.tab-file {
    background: #2a7ab5;
    color: #fff;
    padding: 0 9px 1px;
}

.tab-active {
    background: #eee;
}

.tab-toggle {
    display: flex;
    align-items: center;
    padding-left: 20px;
}

.ribbon {
    display: flex;
    height: 96px;
    border-bottom: 1px solid #cbcbcb;
    background: #eee;
}

.group {
    display: flex;
    flex-direction: column;
    justify-content: space-between;
    margin: 1px 0;
    padding: 0 3px;
    border-right: 1px solid #dcdcdc;
}

.group-body {
    display: flex;
    align-items: flex-start;
}

.group-title {
    display: flex;
    align-items: center;
    justify-content: center;
    gap: 6px;
    height: 18px;
    padding-bottom: 2px;
    white-space: nowrap;
}

.group-select {
    padding: 0 6px;
}

.group-select .group-body {
    justify-content: center;
}

.group-family {
    padding: 0;
    margin-left: 3px;
    border: none;
}

.group-family .group-title {
    background: #c8c8e6;
}

.big {
    display: flex;
    flex-direction: column;
    align-items: center;
    height: 75px;
    padding: 4px 4px 0 3px;
    line-height: 15px;
    text-align: center;
    position: relative;
}

.big > svg:first-child {
    margin-bottom: 4px;
}

.big-active {
    height: 73px;
    margin-top: 2px;
    padding-top: 1px;
    border: 1px solid #0b62c4;
    background: linear-gradient(#c3dcf4, #aacdee);
}

.big-low {
    padding: 7px 12px 0 16px;
}

.big-drop {
    padding: 3px 9px 0 7px;
}

.under {
    margin-top: 3px;
}

/* arrow that hangs beside the second text line */
.beside {
    position: absolute;
    right: 2px;
    bottom: 19px;
}

.group-rule {
    width: 1px;
    height: 71px;
    margin: 0 0 0 5px;
    background: #c8c8c8;
}

.disabled {
    color: #a8a8a8;
}

.disabled svg {
    filter: grayscale(1);
    opacity: .4;
}

.disabled .under {
    opacity: 1;
}

.group-stack {
    flex-direction: column;
    gap: 6px;
    padding: 16px 4px 0;
}

.small {
    display: flex;
    align-items: center;
    gap: 4px;
    height: 18px;
}

.tint {
    mix-blend-mode: multiply;
}

.units {
    font: 15px "Open Sans", sans-serif;
    fill: #fff;
    text-anchor: middle;
}

.badge {
    font: bold 7px "Open Sans", sans-serif;
    fill: #fff;
    text-anchor: middle;
}

.options-bar {
    height: 26px;
}

/* workspace */
.workspace {
    flex: 1;
    display: flex;
    min-height: 0;
    border-top: 2px solid #cbcbcb;
}

.sidebar {
    display: flex;
    flex-direction: column;
    width: 330px;
    padding: 0 2px 0 1px;
    border-right: 2px solid #cbcbcb;
}

.panel {
    display: flex;
    flex-direction: column;
}

.properties {
    flex: 1;
    border-bottom: 2px solid #cbcbcb;
}

.browser {
    flex: 1;
    color: #000;
}

.panel-head {
    display: flex;
    align-items: center;
    justify-content: space-between;
    height: 20px;
    padding: 0 0 0 2px;
    color: #444;
}

.panel-close {
    display: flex;
    padding: 2px;
}

.type-preview {
    display: flex;
    align-items: center;
    justify-content: space-between;
    height: 72px;
    padding: 0 1px 0 2px;
    border: 1px solid #dcdcdc;
    background: linear-gradient(#f8f8f8, #e8e8e8);
}

.thumb {
    padding: 2px 1px;
    border: 1px solid #d6d6d6;
    background: #efefef;
}

.thumb svg {
    overflow: visible;
}

.thumb-r {
    font: bold 48px "Open Sans", sans-serif;
    fill: #9d9d9d;
}

.type-row {
    display: flex;
    align-items: center;
    height: 25px;
    gap: 6px;
    color: #000;
}

.select-wrap {
    position: relative;
    width: 213px;
}

.select-wrap select {
    width: 100%;
    height: 23px;
    padding: 0 3px;
    border: 1px solid #a6a6a6;
    border-radius: 0;
    background: #e0e0e0;
    appearance: none;
}

.select-wrap svg {
    position: absolute;
    right: 4px;
    top: 9px;
}

.edit-type {
    display: flex;
    align-items: center;
    gap: 4px;
    padding-bottom: 3px;
    color: #a0a0a0;
}

.category {
    display: flex;
    align-items: center;
    justify-content: space-between;
    height: 18px;
    padding: 0 5px 2px 2px;
    background: #dcdcdc;
    color: #000;
}

.prop-row {
    display: flex;
    align-items: stretch;
    height: 17px;
    background: #fff;
    color: #000;
    border-bottom: 1px dotted #777;
}

.prop-row label {
    flex: 1;
    padding-left: 8px;
}

.prop-value {
    display: flex;
    align-items: center;
    width: 159px;
    height: 17px;
    padding: 0 2px;
    border: 1px solid #000;
}

.prop-value input {
    width: 13px;
    height: 13px;
    border: 1px solid #222;
    background: #fff;
    appearance: none;
}

.prop-space {
    flex: 1;
    background: #fff;
}

.panel-foot {
    display: flex;
    align-items: center;
    justify-content: space-between;
    height: 28px;
    padding: 0 2px 3px;
}

.panel-foot a {
    color: #0066cc;
}

.apply {
    width: 73px;
    height: 21px;
    border: 1px solid #bfbfbf;
    background: #cccccc;
    color: #838383;
}

.tree {
    flex: 1;
    background: repeating-linear-gradient(#999 0 1px, #fff 1px 2px) 8px 9px / 1px 90px no-repeat #fff;
}

.node {
    display: flex;
    align-items: center;
    height: 18px;
    padding-left: 4px;
}

.node-sub {
    padding-left: 24px;
}

.node-leaf {
    padding-left: 9px;
}

.node span {
    margin-left: 3px;
    padding: 0 3px 3px;
}

.node .node-on {
    background: #e2e2e2;
}

.expander {
    width: 9px;
    height: 9px;
    border: 1px solid #919191;
    background: linear-gradient(#1f3d8f, #1f3d8f) center / 5px 1px no-repeat, linear-gradient(#1f3d8f, #1f3d8f) center / 1px 5px no-repeat, #fff;
}

.open {
    background: linear-gradient(#1f3d8f, #1f3d8f) center / 5px 1px no-repeat, #fff;
}

.dash {
    width: 7px;
    border-top: 1px dotted #999;
}

.dash-long {
    width: 11px;
}

/* drawing area */
.editor {
    flex: 1;
    display: flex;
    flex-direction: column;
    min-width: 0;
}

.doc-tabs {
    display: flex;
    height: 20px;
    background: #cbcbcb;
}

.doc-tab {
    display: flex;
    align-items: center;
    gap: 7px;
    width: 128px;
    padding: 0 3px 0 5px;
    color: #444;
}

.doc-active {
    background: #fff;
}

.doc-active span {
    flex: 1;
    padding-left: 4px;
}

.faded {
    opacity: .5;
}

.tab-list {
    margin-left: auto;
    padding-right: 4px;
}

.view {
    flex: 1;
    display: flex;
    min-height: 0;
}

.canvas {
    flex: 1;
    position: relative;
    background: #fff;
}

.drawing {
    position: absolute;
    inset: 0;
}

.lines {
    fill: none;
    stroke: #000;
    shape-rendering: crispEdges;
}

.micro {
    font: 3px "Liberation Sans", sans-serif;
    fill: #222;
}

.micro-bold {
    font-weight: bold;
    font-size: 4px;
}

.brand {
    font: 500 11px Inter, sans-serif;
    fill: #e2001a;
}

.brand-sub {
    fill: #e2001a;
}

.field {
    font: 5px "Liberation Sans", sans-serif;
    fill: #000;
}

.field-m {
    font-size: 6px;
}

.field-l {
    font-size: 9px;
}

.navbar {
    position: absolute;
    top: 2px;
    right: 1px;
    width: 36px;
    padding: 2px;
    border: 2px solid #bcbcbc;
    border-radius: 6px;
    background: #f2f2f2;
}

.nav-dot {
    display: block;
    margin-left: auto;
}

.nav-tool {
    display: flex;
    flex-direction: column;
    align-items: center;
    gap: 5px;
    width: 100%;
    padding: 6px 0 4px;
    border-bottom: 1px solid #bcbcbc;
}

.nav-zoom {
    border: none;
    gap: 8px;
    padding: 8px 0 10px;
}

.nav-tool svg:last-child {
    opacity: .6;
}

.two-d {
    font: bold 9px "Open Sans", sans-serif;
    fill: #7ba3cf;
}

.vscroll {
    display: flex;
    flex-direction: column;
    align-items: center;
    justify-content: space-between;
    width: 16px;
    margin-top: 2px;
    padding: 5px 0;
    background: #f0f0f0;
}

.thumb-v, .thumb-h {
    width: 16px;
    height: 17px;
    background: #cdcdcd;
}

.view-control {
    display: flex;
    align-items: center;
    height: 18px;
    padding: 0 3px;
    gap: 4px;
    background: #f0f0f0;
    border-bottom: 2px solid #fff;
}

.hscroll {
    flex: 1;
    display: flex;
    align-items: center;
    justify-content: space-between;
    padding: 0 6px 0 4px;
}

.thumb-h {
    height: 16px;
}

/* status bar */
.statusbar {
    display: flex;
    align-items: center;
    justify-content: space-between;
    height: 24px;
    padding-left: 1px;
    background: #cbcbcb;
    color: #000;
}

.status-tools {
    display: flex;
    align-items: center;
    gap: 8px;
    padding-right: 3px;
}

.filter {
    display: flex;
    align-items: center;
    margin-right: 54px;
}
```
